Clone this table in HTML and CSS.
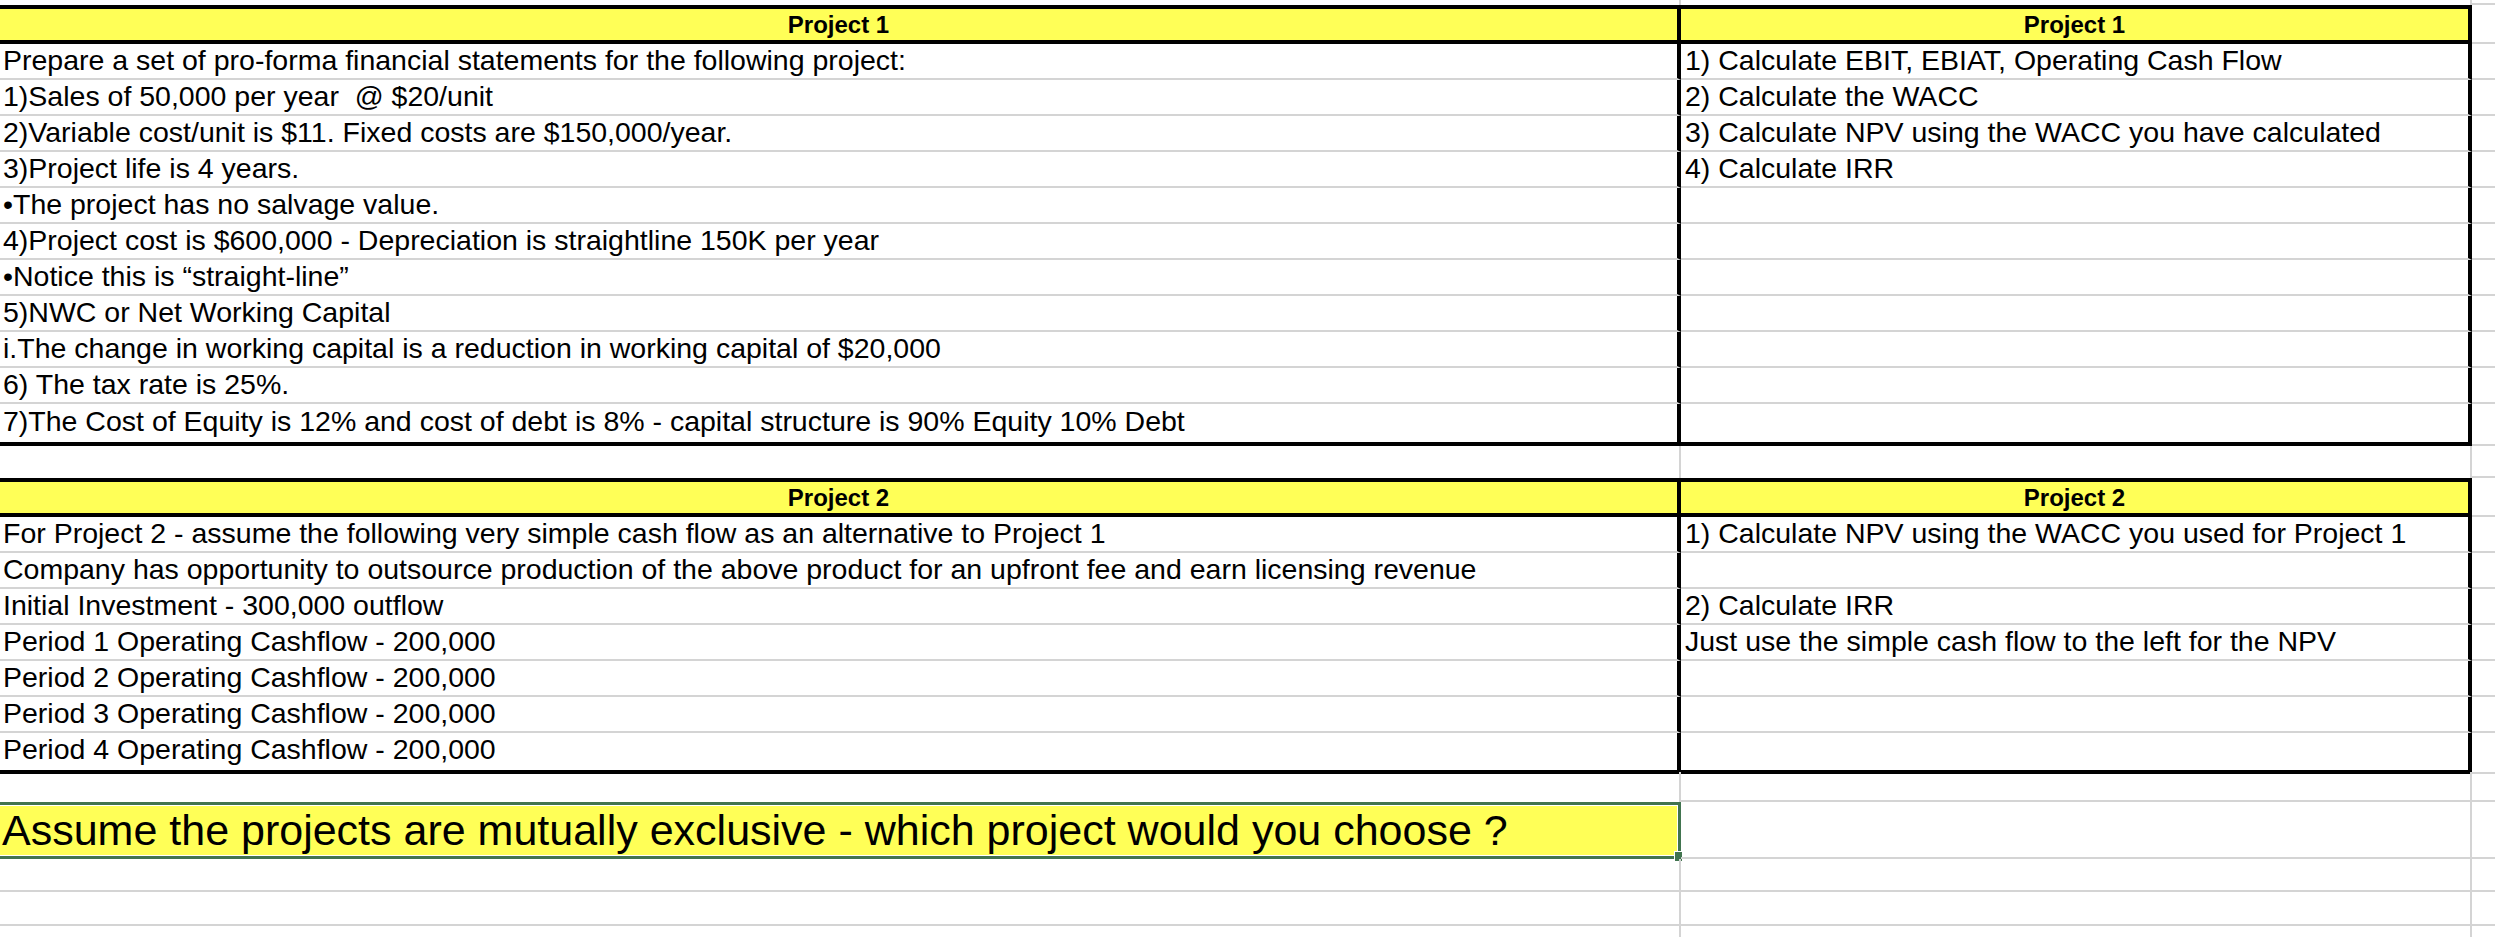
FILE: index.html
```html
<!DOCTYPE html>
<html lang="en">
<head>
<meta charset="utf-8">
<title>Projects</title>
<link rel="stylesheet" href="styles.css">
</head>
<body>
<div class="sheet">
  <div class="row r-top">
    <div class="cell a"></div><div class="cell b"></div><div class="cell c"></div>
  </div>

  <div class="row r-hdr">
    <div class="cell a hdr">Project 1</div><div class="cell b hdr">Project 1</div><div class="cell c"></div>
  </div>
  <div class="row r">
    <div class="cell a t">Prepare a set of pro-forma financial statements for the following project:</div>
    <div class="cell b t">1) Calculate EBIT, EBIAT, Operating Cash Flow</div><div class="cell c"></div>
  </div>
  <div class="row r">
    <div class="cell a t">1)Sales of 50,000 per year&nbsp; @ $20/unit</div>
    <div class="cell b t">2) Calculate the WACC</div><div class="cell c"></div>
  </div>
  <div class="row r">
    <div class="cell a t">2)Variable cost/unit is $11. Fixed costs are $150,000/year.</div>
    <div class="cell b t">3) Calculate NPV using the WACC you have calculated</div><div class="cell c"></div>
  </div>
  <div class="row r">
    <div class="cell a t">3)Project life is 4 years.</div>
    <div class="cell b t">4) Calculate IRR</div><div class="cell c"></div>
  </div>
  <div class="row r">
    <div class="cell a t">•The project has no salvage value.</div>
    <div class="cell b t"></div><div class="cell c"></div>
  </div>
  <div class="row r">
    <div class="cell a t">4)Project cost is $600,000 - Depreciation is straightline 150K per year</div>
    <div class="cell b t"></div><div class="cell c"></div>
  </div>
  <div class="row r">
    <div class="cell a t">•Notice this is “straight-line”</div>
    <div class="cell b t"></div><div class="cell c"></div>
  </div>
  <div class="row r">
    <div class="cell a t">5)NWC or Net Working Capital</div>
    <div class="cell b t"></div><div class="cell c"></div>
  </div>
  <div class="row r">
    <div class="cell a t">i.The change in working capital is a reduction in working capital of $20,000</div>
    <div class="cell b t"></div><div class="cell c"></div>
  </div>
  <div class="row r">
    <div class="cell a t">6) The tax rate is 25%.</div>
    <div class="cell b t"></div><div class="cell c"></div>
  </div>
  <div class="row r-last1">
    <div class="cell a t last">7)The Cost of Equity is 12% and cost of debt is 8% - capital structure is 90% Equity 10% Debt</div>
    <div class="cell b t last"></div><div class="cell c"></div>
  </div>

  <div class="row r-gap1">
    <div class="cell a gap"></div><div class="cell b gap"></div><div class="cell c"></div>
  </div>

  <div class="row r-hdr">
    <div class="cell a hdr">Project 2</div><div class="cell b hdr">Project 2</div><div class="cell c"></div>
  </div>
  <div class="row r">
    <div class="cell a t">For Project 2 - assume the following very simple cash flow as an alternative to Project 1</div>
    <div class="cell b t">1) Calculate NPV using the WACC you used for Project 1</div><div class="cell c"></div>
  </div>
  <div class="row r">
    <div class="cell a t">Company has opportunity to outsource production of the above product for an upfront fee and earn licensing revenue</div>
    <div class="cell b t"></div><div class="cell c"></div>
  </div>
  <div class="row r">
    <div class="cell a t">Initial Investment - 300,000 outflow</div>
    <div class="cell b t">2) Calculate IRR</div><div class="cell c"></div>
  </div>
  <div class="row r">
    <div class="cell a t">Period 1 Operating Cashflow - 200,000</div>
    <div class="cell b t">Just use the simple cash flow to the left for the NPV</div><div class="cell c"></div>
  </div>
  <div class="row r">
    <div class="cell a t">Period 2 Operating Cashflow - 200,000</div>
    <div class="cell b t"></div><div class="cell c"></div>
  </div>
  <div class="row r">
    <div class="cell a t">Period 3 Operating Cashflow - 200,000</div>
    <div class="cell b t"></div><div class="cell c"></div>
  </div>
  <div class="row r-last2">
    <div class="cell a t last">Period 4 Operating Cashflow - 200,000</div>
    <div class="cell b t last"></div><div class="cell c"></div>
  </div>

  <div class="row r-gap2">
    <div class="cell a gap"></div><div class="cell b plain"></div><div class="cell c"></div>
  </div>

  <div class="row r-yellow">
    <div class="cell a question">Assume the projects are mutually exclusive - which project would you choose ?<span class="handle"></span></div>
    <div class="cell b plain"></div><div class="cell c"></div>
  </div>
  <div class="row r-tail1">
    <div class="cell a plain"></div><div class="cell b plain"></div><div class="cell c"></div>
  </div>
  <div class="row r-tail2">
    <div class="cell a plain"></div><div class="cell b plain"></div><div class="cell c"></div>
  </div>
  <div class="row r-tail2">
    <div class="cell a plain"></div><div class="cell b plain"></div><div class="cell c"></div>
  </div>
</div>
</body>
</html>
```

FILE: styles.css
```css
html, body {
  margin: 0;
  padding: 0;
  background: #ffffff;
  overflow: hidden;
}

body {
  font-family: "Liberation Sans", Arial, sans-serif;
  color: #000000;
}

.sheet {
  width: 2495px;
  height: 937px;
  overflow: hidden;
}

.row {
  display: grid;
  grid-template-columns: 1681px 791px 1fr;
}

.r-top { height: 5px; }
.r-hdr { height: 39px; }
.r { height: 36px; }
.r-last1 { height: 42px; }
.r-gap1 { height: 32px; }
.r-last2 { height: 39px; }
.r-gap2 { height: 30px; }
.r-yellow { height: 57px; }
.r-tail1 { height: 33px; }
.r-tail2 { height: 34px; }

.cell {
  box-sizing: border-box;
  display: flex;
  align-items: flex-end;
  min-width: 0;
  white-space: nowrap;
  position: relative;
}

.c {
  border-bottom: 2px solid #d4d4d4;
}

.r-top .a,
.r-top .b {
  border-right: 2px solid #d4d4d4;
}

.hdr {
  background: #ffff57;
  border-top: 4px solid #000;
  border-bottom: 4px solid #000;
  border-right: 4px solid #000;
  justify-content: center;
  align-items: center;
  font-weight: bold;
  font-size: 24px;
  padding-top: 1px;
}

.t {
  font-size: 28.5px;
  line-height: 33px;
  padding: 0 3px 1px 3px;
  border-bottom: 2px solid #d4d4d4;
  border-right: 4px solid #000;
}

.b.t {
  padding-left: 4px;
}

.t.last {
  border-bottom: 4px solid #000;
  padding-bottom: 4px;
}

.gap {
  border-right: 2px solid #d4d4d4;
}

.plain {
  border-right: 2px solid #d4d4d4;
  border-bottom: 2px solid #d4d4d4;
}

.question {
  background: #ffff57;
  border: 3px solid #41744f;
  border-left: none;
  box-shadow: inset 0 1px 0 #fff, inset 0 -1px 0 #fff, inset -1px 0 0 #fff;
  font-size: 43px;
  line-height: 48px;
  padding: 0 3px 1px 2px;
  align-items: center;
}

.handle {
  position: absolute;
  right: -5px;
  bottom: -6px;
  width: 7px;
  height: 9px;
  background: #41744f;
  border: 1px solid #fff;
}
```
